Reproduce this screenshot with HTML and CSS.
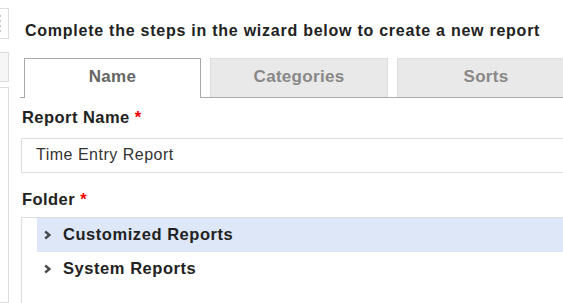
FILE: index.html
```html
<!DOCTYPE html>
<html>
<head>
<meta charset="utf-8">
<link rel="stylesheet" href="styles.css">
</head>
<body>
<div class="page">
  <aside class="side">
    <div class="side-box grip">
      <span></span><span></span><span></span><span></span>
    </div>
    <div class="side-box sel"></div>
    <div class="side-box long"></div>
  </aside>
  <main class="main">
    <h1 class="title">Complete the steps in the wizard below to create a new report</h1>
    <div class="tabs">
      <div class="tab active">Name</div>
      <div class="tab">Categories</div>
      <div class="tab">Sorts</div>
    </div>
    <div class="form">
      <label class="label">Report Name <span class="req">*</span></label>
      <div class="input">Time Entry Report</div>
      <label class="label folder">Folder <span class="req">*</span></label>
      <div class="tree">
        <div class="node hl"><span class="chev"><svg width="7" height="10" viewBox="0 0 7 10"><path d="M1.2 1.5 L5.4 5 L1.2 8.5" fill="none" stroke="#4a4a4a" stroke-width="2.4"/></svg></span>Customized Reports</div>
        <div class="node"><span class="chev"><svg width="7" height="10" viewBox="0 0 7 10"><path d="M1.2 1.5 L5.4 5 L1.2 8.5" fill="none" stroke="#4a4a4a" stroke-width="2.4"/></svg></span>System Reports</div>
      </div>
    </div>
  </main>
</div>
</body>
</html>
```
FILE: styles.css
```css
html, body {
  margin: 0;
  padding: 0;
  background: #fff;
  overflow: hidden;
}
body {
  font-family: "Liberation Sans", Arial, sans-serif;
  color: #222;
}
.page {
  display: flex;
  width: 563px;
  height: 303px;
  overflow: hidden;
}
.side {
  width: 10px;
  flex: none;
  display: flex;
  flex-direction: column;
}
.side-box {
  width: 38px;
  margin-left: -29px;
  border: 1px solid #ddd;
  box-sizing: border-box;
  background: #fff;
}
.grip {
  margin-top: 8px;
  height: 37px;
  display: grid;
  grid-template-columns: 2px;
  justify-content: end;
  align-content: center;
  gap: 3px;
  padding-right: 7px;
}
.grip span {
  width: 2px;
  height: 2px;
  background: #c4c4c4;
}
.sel {
  margin-top: 13px;
  height: 35px;
  background: #f6f6f6;
}
.long {
  margin-top: 5px;
  height: 260px;
}
.main {
  flex: 1;
  min-width: 0;
  padding-left: 10px;
}
.title {
  margin: 0;
  padding: 22px 0 0 5px;
  font-size: 16px;
  letter-spacing: 0.75px;
  font-weight: bold;
  line-height: 18px;
  color: #222;
  white-space: nowrap;
}
.tabs {
  display: flex;
  gap: 9px;
  margin-top: 18px;
  padding-left: 4px;
  border-bottom: 1px solid #aaa;
  height: 39px;
  width: 700px;
}
.tab {
  flex: none;
  width: 178px;
  height: 39px;
  box-sizing: border-box;
  background: #e9e9e9;
  border: 1px solid #ddd;
  border-bottom: none;
  color: #888;
  font-size: 17px;
  letter-spacing: 0.3px;
  font-weight: bold;
  display: flex;
  align-items: center;
  justify-content: center;
  padding-bottom: 2px;
}
.tab.active {
  width: 177px;
  background: #fff;
  border: 1px solid #aaa;
  border-bottom: none;
  height: 40px;
  color: #666;
  position: relative;
  z-index: 1;
  padding-bottom: 3px;
}
.form {
  padding-left: 1px;
}
.label {
  display: block;
  margin-top: 9px;
  padding-left: 1px;
  font-size: 16.5px;
  letter-spacing: 0.45px;
  font-weight: bold;
  color: #222;
  line-height: 20px;
}
.req {
  color: #e00;
}
.input {
  margin-top: 11px;
  height: 35px;
  width: 700px;
  box-sizing: border-box;
  border: 1px solid #ddd;
  padding-left: 14px;
  padding-bottom: 1px;
  font-size: 16px;
  letter-spacing: 0.5px;
  color: #333;
  display: flex;
  align-items: center;
}
.label.folder {
  margin-top: 16px;
}
.tree {
  margin-top: 8px;
  width: 700px;
  height: 120px;
  box-sizing: border-box;
  border: 1px solid #ddd;
  border-right: none;
  padding-left: 15px;
}
.node {
  height: 34px;
  display: flex;
  align-items: center;
  font-size: 16.5px;
  letter-spacing: 0.55px;
  font-weight: bold;
  color: #222;
  padding-left: 7px;
  padding-bottom: 1px;
  box-sizing: border-box;
}
.node.hl {
  background: #dde7f8;
}
.chev {
  display: inline-flex;
  width: 19px;
  align-items: center;
}
```
